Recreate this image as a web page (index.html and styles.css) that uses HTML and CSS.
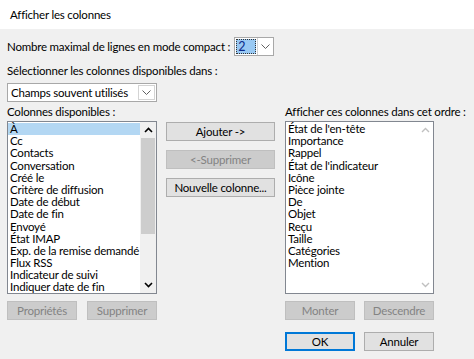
FILE: index.html
```html
<!DOCTYPE html>
<html lang="fr">
<head>
<meta charset="utf-8">
<title>Afficher les colonnes</title>
<link rel="stylesheet" href="styles.css">
</head>
<body>
<div class="dialog">
  <div class="titlebar">Afficher les colonnes</div>
  <div class="content">
    <div class="row-compact">
      <span class="label">Nombre maximal de lignes en mode compact :</span>
      <div class="mini-combo">
        <span class="mini-value"><span class="sel">2</span></span>
        <span class="mini-arrow"><svg width="9" height="5" viewBox="0 0 9 5"><polyline points="0.5,0.5 4.5,4.5 8.5,0.5" fill="none" stroke="#606060" stroke-width="1"/></svg></span>
      </div>
    </div>
    <div class="label row-source">Sélectionner les colonnes disponibles dans :</div>
    <div class="combo">
      <span class="combo-value">Champs souvent utilisés</span>
      <span class="combo-arrow"><svg width="9" height="5" viewBox="0 0 9 5"><polyline points="0.5,0.5 4.5,4.5 8.5,0.5" fill="none" stroke="#606060" stroke-width="1"/></svg></span>
    </div>

    <div class="grid">
      <div class="label col-label">Colonnes disponibles :</div>
      <div></div>
      <div class="label col-label">Afficher ces colonnes dans cet ordre :</div>

      <div class="listbox">
        <ul class="items">
          <li class="selected">À</li>
          <li>Cc</li>
          <li>Contacts</li>
          <li>Conversation</li>
          <li>Créé le</li>
          <li>Critère de diffusion</li>
          <li>Date de début</li>
          <li>Date de fin</li>
          <li>Envoyé</li>
          <li>État IMAP</li>
          <li>Exp. de la remise demandé</li>
          <li>Flux RSS</li>
          <li>Indicateur de suivi</li>
          <li>Indiquer date de fin</li>
        </ul>
        <div class="scrollbar">
          <span class="sb-arrow"><svg width="9" height="6" viewBox="0 0 9 6"><polyline points="1,5 4.5,1.5 8,5" fill="none" stroke="#000" stroke-width="1.6"/></svg></span>
          <div class="sb-track"><div class="sb-thumb"></div></div>
          <span class="sb-arrow"><svg width="9" height="6" viewBox="0 0 9 6"><polyline points="1,1 4.5,4.5 8,1" fill="none" stroke="#000" stroke-width="1.6"/></svg></span>
        </div>
      </div>

      <div class="mid-buttons">
        <button class="btn">Ajouter -&gt;</button>
        <button class="btn disabled">&lt;-Supprimer</button>
        <button class="btn new-col">Nouvelle colonne...</button>
      </div>

      <div class="listbox">
        <ul class="items">
          <li>État de l'en-tête</li>
          <li>Importance</li>
          <li>Rappel</li>
          <li>État de l'indicateur</li>
          <li>Icône</li>
          <li>Pièce jointe</li>
          <li>De</li>
          <li>Objet</li>
          <li>Reçu</li>
          <li>Taille</li>
          <li>Catégories</li>
          <li>Mention</li>
        </ul>
        <div class="scrollbar sb-disabled">
          <span class="sb-arrow"><svg width="9" height="6" viewBox="0 0 9 6"><polyline points="1,5 4.5,1.5 8,5" fill="none" stroke="#c0c0c0" stroke-width="1.4"/></svg></span>
          <div class="sb-track"></div>
          <span class="sb-arrow"><svg width="9" height="6" viewBox="0 0 9 6"><polyline points="1,1 4.5,4.5 8,1" fill="none" stroke="#c0c0c0" stroke-width="1.4"/></svg></span>
        </div>
      </div>

      <div class="pair">
        <button class="btn disabled">Propriétés</button>
        <button class="btn disabled">Supprimer</button>
      </div>
      <div></div>
      <div class="pair">
        <button class="btn disabled">Monter</button>
        <button class="btn disabled">Descendre</button>
      </div>

      <div></div>
      <div></div>
      <div class="pair footer">
        <button class="btn default">OK</button>
        <button class="btn">Annuler</button>
      </div>
    </div>
  </div>
</div>
</body>
</html>
```

FILE: styles.css
```css
* { box-sizing: border-box; }
html, body {
  margin: 0;
  padding: 0;
  background: #f0f0f0;
  font-family: Lato, "Liberation Sans", sans-serif;
  font-size: 11.5px;
  letter-spacing: -0.2px;
  color: #000;
}
.dialog {
  width: 474px;
  height: 359px;
  overflow: hidden;
}
.titlebar {
  height: 29px;
  background: #fff;
  padding-left: 10px;
  line-height: 29px;
}
.content {
  padding-left: 7px;
}
.label {
  line-height: 16px;
  white-space: nowrap;
}
.row-compact {
  display: flex;
  align-items: center;
  margin-top: 8px;
  height: 19px;
}
.mini-combo {
  display: flex;
  margin-left: 4px;
  width: 40px;
  height: 19px;
  border: 1px solid #a8a8a8;
  background: #fff;
}
.mini-value {
  flex: 1;
  padding: 1px;
  display: flex;
}
.sel {
  flex: 1;
  background: #99c9f3;
  outline: 1px dotted #333;
  outline-offset: -1px;
  color: #0a2a8a;
  font-size: 12.5px;
  line-height: 15px;
  padding-left: 2px;
}
.mini-arrow, .combo-arrow {
  width: 16px;
  display: flex;
  align-items: center;
  justify-content: center;
  border-left: 1px solid #d4d4d4;
  background: #fff;
}
.row-source {
  margin-top: 7px;
}
.combo {
  display: flex;
  margin-top: 4px;
  width: 150px;
  height: 19px;
  border: 1px solid #a8a8a8;
  background: #fff;
}
.combo-value {
  flex: 1;
  line-height: 17px;
  padding-left: 3px;
  white-space: nowrap;
}
.combo-arrow {
  width: 17px;
  margin: 1px;
  border: 1px solid #d4d4d4;
}
.grid {
  display: grid;
  grid-template-columns: 150px 109px 150px;
  column-gap: 9px;
  margin-top: 2px;
}
.grid > :nth-child(3n) { margin-left: 1px; }
.col-label {
  height: 17px;
}
.listbox {
  display: flex;
  height: 173px;
  border: 1px solid #828790;
  background: #fff;
}
.items {
  list-style: none;
  margin: 0;
  padding: 1px 0 0 0;
  flex: 1;
  min-width: 0;
  overflow: hidden;
}
.items li {
  line-height: 12.2px;
  height: 12.2px;
  padding-left: 2px;
  white-space: nowrap;
}
.items li.selected {
  background: #b3d7f3;
}
.scrollbar {
  width: 16px;
  flex: none;
  display: flex;
  flex-direction: column;
  background: #f0f0f0;
}
.sb-arrow {
  height: 16px;
  display: flex;
  align-items: center;
  justify-content: center;
}
.sb-track {
  flex: 1;
  padding: 0 1px;
}
.sb-thumb {
  height: 96px;
  background: #cdcdcd;
}
.sb-disabled {
  background: #fff;
}
.mid-buttons {
  display: flex;
  flex-direction: column;
  padding-top: 1px;
}
.btn {
  font: inherit;
  letter-spacing: inherit;
  height: 19px;
  padding: 0;
  background: #e1e1e1;
  border: 1px solid #adadad;
  color: #000;
  line-height: 16px;
  white-space: nowrap;
}
.mid-buttons .btn + .btn { margin-top: 9px; }
.mid-buttons .new-col { margin-top: 15px; }
.btn.disabled {
  background: #cccccc;
  border-color: #bfbfbf;
  color: #838383;
}
.btn.default {
  border: 2px solid #0078d7;
}
.pair {
  display: grid;
  grid-template-columns: 70px 70px;
  justify-content: space-between;
  margin-top: 7px;
}
.footer {
  margin-top: 12px;
}
```
